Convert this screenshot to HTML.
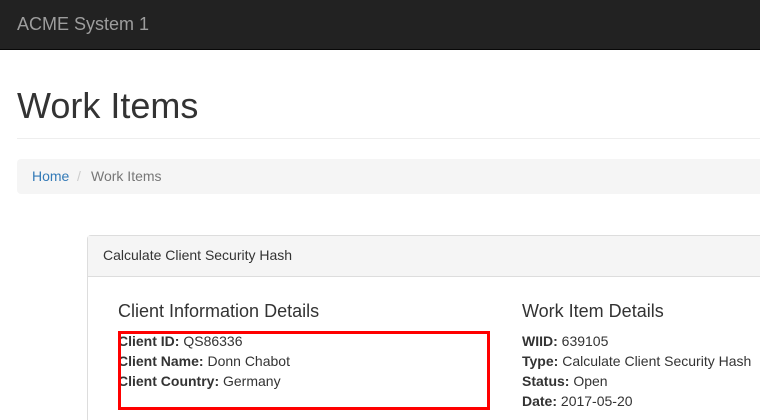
<!DOCTYPE html>
<html style="height:420px;overflow:hidden"><head><style>
body{margin:0;width:760px;height:420px;overflow:hidden;font-family:"Liberation Sans",Arial,sans-serif;font-size:14px;color:#333;background:#fff;position:relative}
.nav{position:absolute;left:0;top:0;width:760px;height:50px;background:#222;border-bottom:1px solid #080808;box-sizing:border-box}
.brand{position:absolute;left:17px;top:14px;font-size:18px;color:#9d9d9d}
h1{position:absolute;left:17px;top:86px;margin:0;font-size:36px;font-weight:500;line-height:40px}
.hr{position:absolute;left:17px;top:138px;width:743px;height:1px;background:#eee}
.bc{position:absolute;left:17px;top:159px;width:743px;height:35px;background:#f5f5f5;border-radius:4px 0 0 4px}
.bc span{position:absolute;top:9px}
.panel{position:absolute;left:87px;top:235px;width:673px;height:185px;border:1px solid #ddd;border-right:0;border-bottom:0;border-radius:4px 0 0 0;box-sizing:border-box}
.ph{height:41px;background:#f5f5f5;border-bottom:1px solid #ddd;box-sizing:border-box;padding:11px 15px}
h3{position:absolute;margin:0;font-size:18px;font-weight:500}
.l{position:absolute;line-height:20px}
.red{position:absolute;left:118px;top:331px;width:372px;height:79px;border:3px solid #f00;box-sizing:border-box}
</style></head><body>
<div class="nav"><div class="brand">ACME System 1</div></div>
<h1>Work Items</h1>
<div class="hr"></div>
<div class="bc"><span style="left:15px;color:#337ab7">Home</span><span style="left:60px;color:#ccc">/</span><span style="left:74px;color:#777">Work Items</span></div>
<div class="panel"><div class="ph">Calculate Client Security Hash</div></div>
<h3 style="left:118px;top:301px">Client Information Details</h3>
<h3 style="left:522px;top:301px">Work Item Details</h3>
<div class="l" style="left:118px;top:331px"><b>Client ID:</b> QS86336<br><b>Client Name:</b> Donn Chabot<br><b>Client Country:</b> Germany</div>
<div class="l" style="left:522px;top:331px"><b>WIID:</b> 639105<br><b>Type:</b> Calculate Client Security Hash<br><b>Status:</b> Open<br><b>Date:</b> 2017-05-20</div>
<div class="red"></div>
</body></html>
